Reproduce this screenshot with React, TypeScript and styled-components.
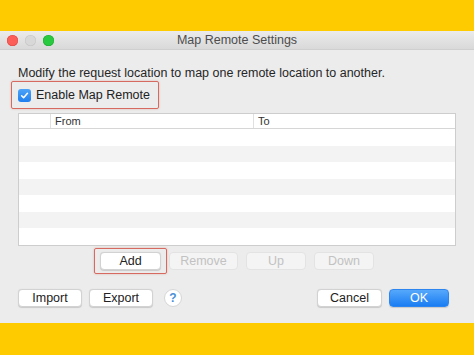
import styled, { createGlobalStyle } from "styled-components";

const GlobalStyle = createGlobalStyle`
    html, body {
        margin: 0;
        padding: 0;
        background: #fecb00;
    }
    body {
        font-family: "Liberation Sans", Arial, sans-serif;
    }
`;

const Page = styled.div`
    width: 474px;
    height: 355px;
    display: flex;
    flex-direction: column;
    background: #fecb00;
    overflow: hidden;
`;

const Band = styled.div<{ $height: number }>`
    height: ${(p) => p.$height}px;
    flex-shrink: 0;
    background: #fecb00;
`;

const Window = styled.div`
    height: 292px;
    display: flex;
    flex-direction: column;
    background: #ececec;
`;

const TitleBar = styled.div`
    height: 18px;
    display: flex;
    align-items: center;
    justify-content: center;
    position: relative;
    background: linear-gradient(180deg, #ebebeb 0%, #d9d9d9 100%);
    border-bottom: 1px solid #cfcfcf;
    color: #4d4d4d;
    font-size: 12.5px;
`;

const Lights = styled.div`
    position: absolute;
    left: 7px;
    top: 4px;
    display: flex;
    gap: 7px;
`;

const Light = styled.span<{ $color: string; $edge: string }>`
    width: 11px;
    height: 11px;
    border-radius: 50%;
    background: ${(p) => p.$color};
    box-shadow: inset 0 0 0 0.5px ${(p) => p.$edge};
`;

const Body = styled.div`
    flex: 1;
    display: flex;
    flex-direction: column;
    padding: 15px 18px 0 18px;
    color: #222;
`;

const Description = styled.div`
    font-size: 12.5px;
    line-height: 16px;
    color: #262626;
`;

const Highlight = styled.div`
    border: 1.5px solid #d66a60;
    border-radius: 2px;
    box-shadow: 0 0 2px rgba(214, 106, 96, 0.5);
`;

const CheckHighlight = styled(Highlight)`
    align-self: flex-start;
    margin: 0 0 0 -7px;
    padding: 0 8px 0 6px;
    height: 28px;
    box-sizing: border-box;
    display: flex;
    align-items: center;
    gap: 5px;
    font-size: 12.5px;
    color: #222;
`;

const CheckBox = styled.span`
    width: 13px;
    height: 13px;
    border-radius: 3px;
    background: linear-gradient(180deg, #4da3f7 0%, #1f7ff0 100%);
    display: flex;
    align-items: center;
    justify-content: center;
`;

const Table = styled.div`
    margin-top: 4px;
    height: 131px;
    background: #fff;
    border: 1px solid #cdcdcd;
    display: flex;
    flex-direction: column;
`;

const HeaderRow = styled.div`
    height: 14px;
    display: grid;
    grid-template-columns: 31px 203px 1fr;
    border-bottom: 1px solid #d6d6d6;
    font-size: 11px;
    color: #333;
`;

const HeaderCell = styled.div`
    border-left: 1px solid #e0e0e0;
    padding-left: 4px;
    line-height: 14px;
    &:first-child {
        border-left: none;
    }
`;

const DataRow = styled.div<{ $odd: boolean }>`
    flex: 1;
    background: ${(p) => (p.$odd ? "#f3f3f3" : "#ffffff")};
`;

const ButtonRow = styled.div`
    margin-top: 6px;
    display: flex;
    justify-content: center;
    align-items: center;
    gap: 8px;
`;

const AddHighlight = styled(Highlight)`
    margin: -4px -6px;
    padding: 3px 5px;
    display: flex;
`;

const Button = styled.button<{ $width: number; $disabled?: boolean; $primary?: boolean }>`
    width: ${(p) => p.$width}px;
    height: 18px;
    padding: 0;
    border-radius: 4px;
    font-family: "Liberation Sans", Arial, sans-serif;
    font-size: 12.5px;
    line-height: 16px;
    color: ${(p) => (p.$primary ? "#fff" : p.$disabled ? "#c2c2c2" : "#222")};
    background: ${(p) =>
        p.$primary
            ? "linear-gradient(180deg, #56a8fb 0%, #1a7df3 100%)"
            : p.$disabled
              ? "#f4f4f4"
              : "#ffffff"};
    border: 1px solid
        ${(p) => (p.$primary ? "#2d86ef" : p.$disabled ? "#e3e3e3" : "#d2d2d2")};
    box-shadow: ${(p) =>
        p.$disabled ? "none" : "0 0.5px 1px rgba(0, 0, 0, 0.15)"};
`;

const BottomRow = styled.div`
    margin-top: 19px;
    display: flex;
    align-items: center;
    padding-right: 7px;
`;

const Group = styled.div`
    display: flex;
    align-items: center;
    gap: 7px;
`;

const Help = styled.span`
    margin-left: 11px;
    width: 18px;
    height: 18px;
    border-radius: 50%;
    background: #fff;
    border: 1px solid #d6d6d6;
    box-sizing: border-box;
    display: flex;
    align-items: center;
    justify-content: center;
    color: #4b8ed6;
    font-size: 12px;
    font-weight: bold;
`;

const Spacer = styled.div`
    flex: 1;
`;

const ROWS = [0, 1, 2, 3, 4, 5, 6];

export default function App() {
    return (
        <Page>
            <GlobalStyle />
            <Band $height={31} />
            <Window>
                <TitleBar>
                    <Lights>
                        <Light $color="#fc5f57" $edge="#df4744" />
                        <Light $color="#d8d8d8" $edge="#c4c4c4" />
                        <Light $color="#29c940" $edge="#1ea92f" />
                    </Lights>
                    Map Remote Settings
                </TitleBar>
                <Body>
                    <Description>
                        Modify the request location to map one remote location to another.
                    </Description>
                    <CheckHighlight>
                        <CheckBox>
                            <svg width="9" height="9" viewBox="0 0 10 10">
                                <path
                                    d="M1.8 5.3 L4 7.5 L8.3 2.5"
                                    fill="none"
                                    stroke="#fff"
                                    strokeWidth="1.7"
                                    strokeLinecap="round"
                                    strokeLinejoin="round"
                                />
                            </svg>
                        </CheckBox>
                        Enable Map Remote
                    </CheckHighlight>
                    <Table>
                        <HeaderRow>
                            <HeaderCell />
                            <HeaderCell>From</HeaderCell>
                            <HeaderCell>To</HeaderCell>
                        </HeaderRow>
                        {ROWS.map((r) => (
                            <DataRow key={r} $odd={r % 2 === 1} />
                        ))}
                    </Table>
                    <ButtonRow>
                        <AddHighlight>
                            <Button $width={61}>Add</Button>
                        </AddHighlight>
                        <Button $width={69} $disabled>
                            Remove
                        </Button>
                        <Button $width={60} $disabled>
                            Up
                        </Button>
                        <Button $width={60} $disabled>
                            Down
                        </Button>
                    </ButtonRow>
                    <BottomRow>
                        <Group>
                            <Button $width={64}>Import</Button>
                            <Button $width={64}>Export</Button>
                        </Group>
                        <Help>?</Help>
                        <Spacer />
                        <Group>
                            <Button $width={65}>Cancel</Button>
                            <Button $width={60} $primary>
                                OK
                            </Button>
                        </Group>
                    </BottomRow>
                </Body>
            </Window>
            <Band $height={32} />
        </Page>
    );
}
